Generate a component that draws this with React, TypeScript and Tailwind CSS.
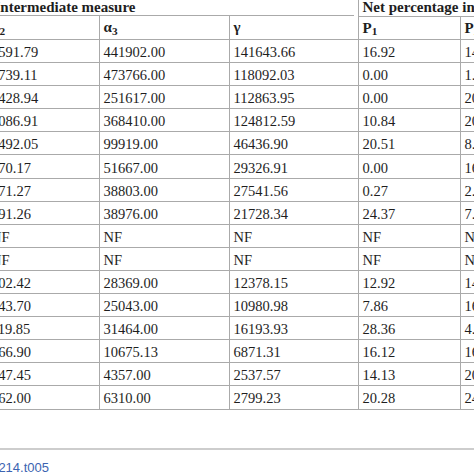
const rows: string[][] = [
  ['1591.79', '441902.00', '141643.66', '16.92', '14.27'],
  ['1739.11', '473766.00', '118092.03', '0.00', '1.92'],
  ['1428.94', '251617.00', '112863.95', '0.00', '20.15'],
  ['1086.91', '368410.00', '124812.59', '10.84', '20.63'],
  ['1492.05', '99919.00', '46436.90', '20.51', '8.37'],
  ['170.17', '51667.00', '29326.91', '0.00', '16.45'],
  ['171.27', '38803.00', '27541.56', '0.27', '2.19'],
  ['191.26', '38976.00', '21728.34', '24.37', '7.58'],
  ['NF', 'NF', 'NF', 'NF', 'NF'],
  ['NF', 'NF', 'NF', 'NF', 'NF'],
  ['102.42', '28369.00', '12378.15', '12.92', '14.22'],
  ['143.70', '25043.00', '10980.98', '7.86', '16.80'],
  ['119.85', '31464.00', '16193.93', '28.36', '4.31'],
  ['166.90', '10675.13', '6871.31', '16.12', '16.05'],
  ['147.45', '4357.00', '2537.57', '14.13', '20.44'],
  ['162.00', '6310.00', '2799.23', '20.28', '24.12'],
];

export default function App() {
  return (
    <div className="w-[474px] h-[474px] overflow-hidden bg-white font-['Liberation_Serif',serif] text-[14.5px] text-[#1e1e1e]">
      <table className="table-fixed border-collapse ml-[-13px] w-[573px]">
        <colgroup>
          <col className="w-[112px]" />
          <col className="w-[130px]" />
          <col className="w-[129px]" />
          <col className="w-[102px]" />
          <col className="w-[100px]" />
        </colgroup>
        <thead>
          <tr className="h-[16px]">
            <th colSpan={3} className="p-0 text-left font-bold align-top border-r border-[#aaaaaa]">
              <div className="mr-[4px] pl-[7.5px] border-b border-[#aaaaaa] text-[15px] leading-[15px] whitespace-nowrap">Intermediate measure</div>
            </th>
            <th colSpan={2} className="p-0 pl-[4px] text-left font-bold align-top border-b border-[#aaaaaa] text-[15px] leading-[15px] whitespace-nowrap">
              Net percentage increase
            </th>
          </tr>
          <tr className="h-[22px]">
            <th className="px-[4px] py-0 text-left font-bold text-[15px] border-r border-b border-[#aaaaaa]">α<sub>2</sub></th>
            <th className="px-[4px] py-0 text-left font-bold text-[15px] border-r border-b border-[#aaaaaa]">α<sub>3</sub></th>
            <th className="px-[4px] py-0 text-left font-bold text-[15px] border-r border-b border-[#aaaaaa]">γ</th>
            <th className="px-[4px] py-0 text-left font-bold text-[15px] border-r border-b border-[#aaaaaa]">P<sub>1</sub></th>
            <th className="px-[4px] py-0 text-left font-bold text-[15px] border-r border-b border-[#aaaaaa]">P<sub>2</sub></th>
          </tr>
        </thead>
        <tbody>
          {rows.map((row, i) => (
            <tr key={i} className="h-[23.1px]">
              {row.map((cell, j) => (
                <td key={j} className="px-[4px] py-0 pt-[2px] leading-[16px] text-left whitespace-nowrap border-r border-b border-[#aaaaaa]">
                  {cell}
                </td>
              ))}
            </tr>
          ))}
        </tbody>
      </table>
      <div className="mt-[38px] h-[2px] bg-[#cdcdcd]" />
      <div className="mt-[10px] w-[49px] overflow-hidden flex justify-end">
        <span className="shrink-0 whitespace-nowrap font-['Liberation_Sans',Arial,sans-serif] text-[13px] leading-[15px] text-[#3c64b1]">
          https://doi.org/10.1371/journal.pone.0208214.t005
        </span>
      </div>
    </div>
  );
}
